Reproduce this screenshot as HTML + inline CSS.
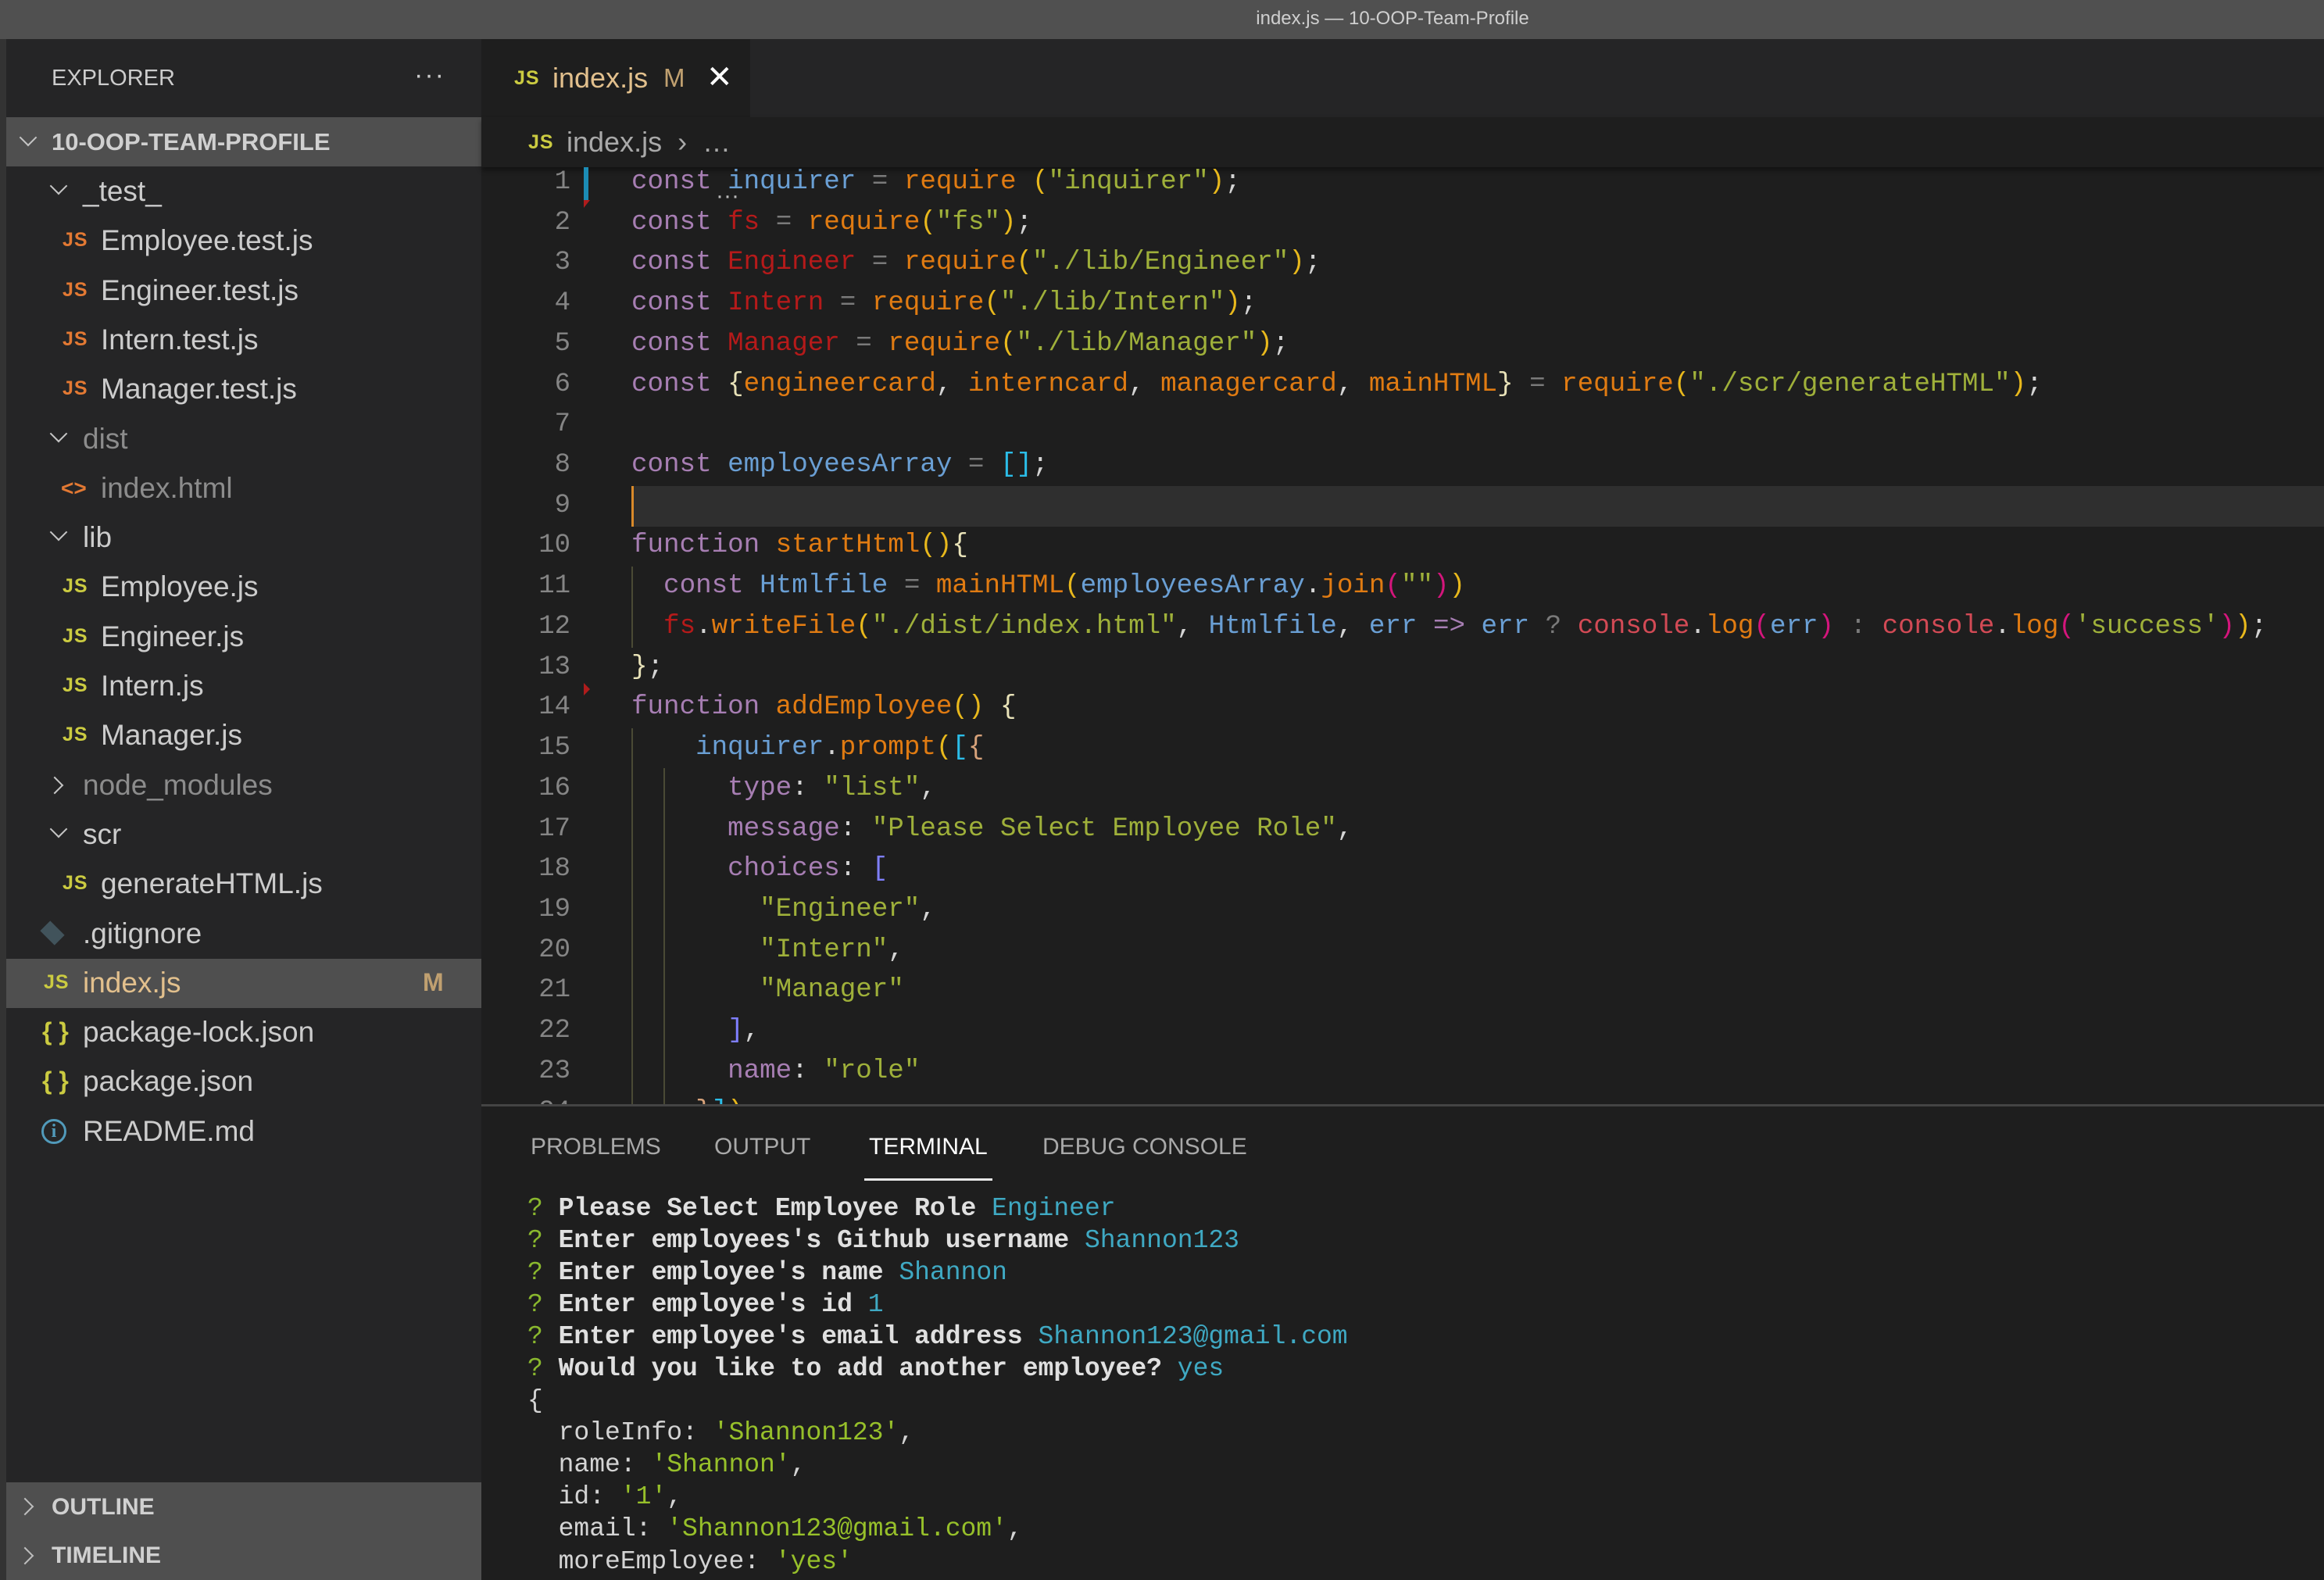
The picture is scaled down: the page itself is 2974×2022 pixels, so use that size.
<!DOCTYPE html>
<html><head><meta charset="utf-8">
<style>
*{margin:0;padding:0;box-sizing:border-box}
html,body{width:2974px;height:2022px;overflow:hidden;background:#1e1e1e}
body{position:relative;font-family:"Liberation Sans",sans-serif}
.a{position:absolute;white-space:pre}
.blk{white-space:normal !important}
.blk>div{white-space:pre}
.mono{font-family:"Liberation Mono",monospace}
.k{color:#a77eb3}.v{color:#6a9fd4}.o{color:#7a7a7a}.f{color:#e07b12}.p{color:#e8b81c}.s{color:#9fb03a}
.r{color:#b51a1a}.w{color:#d4d4d4}.c{color:#e8e2b8}.b{color:#2bbde8}.m{color:#d4157c}.cn{color:#d24a55}
.vi{color:#7f7fff}.t{color:#d7a27a}
.row{position:absolute;left:8px;width:608px;height:63.3px;font-size:37px;color:#cccccc;line-height:63.3px}
.row span{position:absolute;white-space:pre}
.js{font-weight:bold;font-size:25px;letter-spacing:1px}
.chev{position:absolute;width:16px;height:16px;border-right:2.5px solid #c5c5c5;border-bottom:2.5px solid #c5c5c5}
.down{transform:rotate(45deg)}
.right{transform:rotate(-45deg)}
#code div{height:51.73px;line-height:51.73px}
#nums div{height:51.73px;line-height:51.73px;text-align:right}
#term div{height:41.05px;line-height:41.05px}
.tq{color:#8ab82e}.tb{color:#e0e0e0;font-weight:bold}.ta{color:#3fa9c3}.ts{color:#97c02a}.tw{color:#d4d4d4}
</style></head><body>
<div class="a" style="left:0;top:0;width:2974px;height:50px;background:#505050"></div>
<div class="a" style="left:0;top:0;width:2974px;height:50px;line-height:48px;text-align:center;padding-left:590px;font-size:24px;color:#cfcfcf">index.js — 10-OOP-Team-Profile</div>
<div class="a" style="left:0;top:50px;width:8px;height:1972px;background:#333333"></div>
<div class="a" style="left:8px;top:50px;width:608px;height:1972px;background:#252526"></div>
<div class="a" style="left:66px;top:50px;height:100px;line-height:100px;font-size:29px;color:#cccccc">EXPLORER</div>
<div class="a" style="left:530px;top:50px;height:100px;line-height:92px;font-size:34px;color:#cccccc;letter-spacing:2px">···</div>
<div class="a" style="left:8px;top:150px;width:608px;height:63px;background:#4f4f4f"></div>
<div class="chev down" style="left:28px;top:168px"></div>
<div class="a" style="left:66px;top:150px;height:63px;line-height:63px;font-size:31px;font-weight:bold;color:#d0d0d0">10-OOP-TEAM-PROFILE</div>

<div class="a" style="left:8px;top:1227px;width:608px;height:63px;background:#4f4f4f"></div>

<div class="row" style="top:213px"><div class="chev down" style="left:59px;top:17px"></div><span style="left:98px">_test_</span></div>
<div class="row" style="top:276.3px"><span class="js" style="left:72px;color:#e37933">JS</span><span style="left:121px">Employee.test.js</span></div>
<div class="row" style="top:339.6px"><span class="js" style="left:72px;color:#e37933">JS</span><span style="left:121px">Engineer.test.js</span></div>
<div class="row" style="top:402.9px"><span class="js" style="left:72px;color:#e37933">JS</span><span style="left:121px">Intern.test.js</span></div>
<div class="row" style="top:466.2px"><span class="js" style="left:72px;color:#e37933">JS</span><span style="left:121px">Manager.test.js</span></div>
<div class="row" style="top:529.5px"><div class="chev down" style="left:59px;top:17px"></div><span style="left:98px;color:#8c8c8c">dist</span></div>
<div class="row" style="top:592.8px"><span style="left:70px;color:#e37933;font-size:28px;font-weight:bold">&lt;&gt;</span><span style="left:121px;color:#8c8c8c">index.html</span></div>
<div class="row" style="top:656.1px"><div class="chev down" style="left:59px;top:17px"></div><span style="left:98px">lib</span></div>
<div class="row" style="top:719.4px"><span class="js" style="left:72px;color:#cbcb41">JS</span><span style="left:121px">Employee.js</span></div>
<div class="row" style="top:782.7px"><span class="js" style="left:72px;color:#cbcb41">JS</span><span style="left:121px">Engineer.js</span></div>
<div class="row" style="top:846px"><span class="js" style="left:72px;color:#cbcb41">JS</span><span style="left:121px">Intern.js</span></div>
<div class="row" style="top:909.3px"><span class="js" style="left:72px;color:#cbcb41">JS</span><span style="left:121px">Manager.js</span></div>
<div class="row" style="top:972.6px"><div class="chev right" style="left:54px;top:24px"></div><span style="left:98px;color:#8c8c8c">node_modules</span></div>
<div class="row" style="top:1035.9px"><div class="chev down" style="left:59px;top:17px"></div><span style="left:98px">scr</span></div>
<div class="row" style="top:1099.2px"><span class="js" style="left:72px;color:#cbcb41">JS</span><span style="left:121px">generateHTML.js</span></div>
<div class="row" style="top:1162.5px"><span style="left:46px;top:18px;width:26px;height:26px;background:#41535b;transform:rotate(45deg) scaleY(0.7)"></span><span style="left:98px">.gitignore</span></div>
<div class="row" style="top:1225.8px"><span class="js" style="left:48px;color:#cbcb41">JS</span><span style="left:98px;color:#e2c08d">index.js</span><span style="left:533px;color:#c0a070;font-weight:bold;font-size:32px">M</span></div>
<div class="row" style="top:1289.1px"><span style="left:46px;color:#cbcb41;font-weight:bold;font-size:32px">{ }</span><span style="left:98px">package-lock.json</span></div>
<div class="row" style="top:1352.4px"><span style="left:46px;color:#cbcb41;font-weight:bold;font-size:32px">{ }</span><span style="left:98px">package.json</span></div>
<div class="row" style="top:1415.7px"><span style="left:45px;top:16px;width:32px;height:32px;border:3px solid #519aba;border-radius:50%;color:#519aba;font-size:24px;line-height:26px;text-align:center;font-weight:bold;font-family:'Liberation Serif',serif">i</span><span style="left:98px">README.md</span></div>

<div class="a" style="left:8px;top:1897px;width:608px;height:125px;background:#4f4f4f"></div>
<div class="chev right" style="left:24px;top:1920px;border-color:#bdbdbd"></div>
<div class="a" style="left:66px;top:1897px;height:63px;line-height:63px;font-size:30px;font-weight:bold;color:#d0d0d0">OUTLINE</div>
<div class="chev right" style="left:24px;top:1983px;border-color:#bdbdbd"></div>
<div class="a" style="left:66px;top:1960px;height:62px;line-height:62px;font-size:30px;font-weight:bold;color:#d0d0d0">TIMELINE</div>

<div class="a" style="left:616px;top:50px;width:2358px;height:100px;background:#252526"></div>
<div class="a" style="left:616px;top:50px;width:344px;height:100px;background:#1e1e1e"></div>
<div class="a js" style="left:658px;top:50px;line-height:100px;color:#cbcb41">JS</div>
<div class="a" style="left:707px;top:50px;line-height:100px;font-size:36px;color:#e2c08d">index.js</div>
<div class="a" style="left:849px;top:50px;line-height:100px;font-size:33px;color:#c0a070">M</div>
<div class="a" style="left:904px;top:50px;line-height:98px;font-size:40px;color:#ffffff">✕</div>
<div class="a" style="left:616px;top:150px;width:2358px;height:64px;background:#1e1e1e;box-shadow:0 4px 6px rgba(0,0,0,0.4)"></div>
<div class="a js" style="left:676px;top:150px;line-height:64px;color:#cbcb41">JS</div>
<div class="a" style="left:725px;top:150px;line-height:64px;font-size:36px;color:#a9a9a9">index.js  ›  …</div>

<div class="a" style="left:616px;top:214px;width:2358px;height:1199px;overflow:hidden">
  <div class="a" style="left:192px;top:407.8px;width:2200px;height:51.73px;background:#2f2f2f"></div>
  <div class="a" style="left:192px;top:407.8px;width:3px;height:51.73px;background:#d98a2a"></div>
  <div class="a" style="left:131px;top:-4px;width:6px;height:46px;background:#1c8cb5"></div>
  <div class="a" style="left:131px;top:42px;width:0;height:0;border-left:8px solid #b01c1c;border-bottom:10px solid transparent"></div>
  <div class="a" style="left:131px;top:660px;width:0;height:0;border-left:8px solid #b01c1c;border-top:8px solid transparent;border-bottom:8px solid transparent"></div>
  <div class="a" style="left:192px;top:511px;width:2px;height:104px;background:#4a4a35"></div>
  <div class="a" style="left:192px;top:718px;width:2px;height:500px;background:#4a4a35"></div>
  <div class="a" style="left:233px;top:769px;width:2px;height:460px;background:#4a4a35"></div>
  <div class="a" style="left:300px;top:32px;font-size:30px;color:#bbbbbb;line-height:10px">···</div>
  <div id="nums" class="a blk mono" style="left:0;top:-6px;width:114px;font-size:34px;color:#858585"><div>1</div><div>2</div><div>3</div><div>4</div><div>5</div><div>6</div><div>7</div><div>8</div><div>9</div><div>10</div><div>11</div><div>12</div><div>13</div><div>14</div><div>15</div><div>16</div><div>17</div><div>18</div><div>19</div><div>20</div><div>21</div><div>22</div><div>23</div><div>24</div></div>
  <div id="code" class="a blk mono w" style="left:192px;top:-6px;font-size:34.2px">
<div><span class="k">const</span> <span class="v">inquirer</span> <span class="o">=</span> <span class="f">require</span> <span class="p">(</span><span class="s">"inquirer"</span><span class="p">)</span>;</div>
<div><span class="k">const</span> <span class="r">fs</span> <span class="o">=</span> <span class="f">require</span><span class="p">(</span><span class="s">"fs"</span><span class="p">)</span>;</div>
<div><span class="k">const</span> <span class="r">Engineer</span> <span class="o">=</span> <span class="f">require</span><span class="p">(</span><span class="s">"./lib/Engineer"</span><span class="p">)</span>;</div>
<div><span class="k">const</span> <span class="r">Intern</span> <span class="o">=</span> <span class="f">require</span><span class="p">(</span><span class="s">"./lib/Intern"</span><span class="p">)</span>;</div>
<div><span class="k">const</span> <span class="r">Manager</span> <span class="o">=</span> <span class="f">require</span><span class="p">(</span><span class="s">"./lib/Manager"</span><span class="p">)</span>;</div>
<div><span class="k">const</span> <span class="c">{</span><span class="f">engineercard</span>, <span class="f">interncard</span>, <span class="f">managercard</span>, <span class="f">mainHTML</span><span class="c">}</span> <span class="o">=</span> <span class="f">require</span><span class="p">(</span><span class="s">"./scr/generateHTML"</span><span class="p">)</span>;</div>
<div> </div>
<div><span class="k">const</span> <span class="v">employeesArray</span> <span class="o">=</span> <span class="b">[]</span>;</div>
<div> </div>
<div><span class="k">function</span> <span class="f">startHtml</span><span class="p">()</span><span class="c">{</span></div>
<div>  <span class="k">const</span> <span class="v">Htmlfile</span> <span class="o">=</span> <span class="f">mainHTML</span><span class="p">(</span><span class="v">employeesArray</span>.<span class="f">join</span><span class="m">(</span><span class="s">""</span><span class="m">)</span><span class="p">)</span></div>
<div>  <span class="r">fs</span>.<span class="f">writeFile</span><span class="p">(</span><span class="s">"./dist/index.html"</span>, <span class="v">Htmlfile</span>, <span class="v">err</span> <span class="k">=&gt;</span> <span class="v">err</span> <span class="o">?</span> <span class="cn">console</span>.<span class="f">log</span><span class="m">(</span><span class="v">err</span><span class="m">)</span> <span class="o">:</span> <span class="cn">console</span>.<span class="f">log</span><span class="m">(</span><span class="s">'success'</span><span class="m">)</span><span class="p">)</span>;</div>
<div><span class="c">}</span>;</div>
<div><span class="k">function</span> <span class="f">addEmployee</span><span class="p">()</span> <span class="c">{</span></div>
<div>    <span class="v">inquirer</span>.<span class="f">prompt</span><span class="p">(</span><span class="b">[</span><span class="t">{</span></div>
<div>      <span class="k">type</span>: <span class="s">"list"</span>,</div>
<div>      <span class="k">message</span>: <span class="s">"Please Select Employee Role"</span>,</div>
<div>      <span class="k">choices</span>: <span class="vi">[</span></div>
<div>        <span class="s">"Engineer"</span>,</div>
<div>        <span class="s">"Intern"</span>,</div>
<div>        <span class="s">"Manager"</span></div>
<div>      <span class="vi">]</span>,</div>
<div>      <span class="k">name</span>: <span class="s">"role"</span></div>
<div>    <span class="t">}</span><span class="b">]</span><span class="p">)</span></div>
  </div>
</div>

<div class="a" style="left:616px;top:1413px;width:2358px;height:3px;background:#444444"></div>
<div class="a" style="left:616px;top:1416px;width:2358px;height:606px;background:#1e1e1e"></div>
<div class="a" style="left:679px;top:1446px;line-height:44px;font-size:30px;color:#a9a9a9">PROBLEMS</div>
<div class="a" style="left:914px;top:1446px;line-height:44px;font-size:30px;color:#a9a9a9">OUTPUT</div>
<div class="a" style="left:1112px;top:1446px;line-height:44px;font-size:30px;color:#ffffff">TERMINAL</div>
<div class="a" style="left:1334px;top:1446px;line-height:44px;font-size:30px;color:#a9a9a9">DEBUG CONSOLE</div>
<div class="a" style="left:1106px;top:1508px;width:164px;height:3px;background:#e7e7e7"></div>
<div id="term" class="a blk mono" style="left:675px;top:1526px;font-size:33px">
<div><span class="tq">?</span> <span class="tb">Please Select Employee Role</span> <span class="ta">Engineer</span></div>
<div><span class="tq">?</span> <span class="tb">Enter employees's Github username</span> <span class="ta">Shannon123</span></div>
<div><span class="tq">?</span> <span class="tb">Enter employee's name</span> <span class="ta">Shannon</span></div>
<div><span class="tq">?</span> <span class="tb">Enter employee's id</span> <span class="ta">1</span></div>
<div><span class="tq">?</span> <span class="tb">Enter employee's email address</span> <span class="ta">Shannon123@gmail.com</span></div>
<div><span class="tq">?</span> <span class="tb">Would you like to add another employee?</span> <span class="ta">yes</span></div>
<div class="tw">{</div>
<div class="tw">  roleInfo: <span class="ts">'Shannon123'</span>,</div>
<div class="tw">  name: <span class="ts">'Shannon'</span>,</div>
<div class="tw">  id: <span class="ts">'1'</span>,</div>
<div class="tw">  email: <span class="ts">'Shannon123@gmail.com'</span>,</div>
<div class="tw">  moreEmployee: <span class="ts">'yes'</span></div>
</div>
</body></html>
